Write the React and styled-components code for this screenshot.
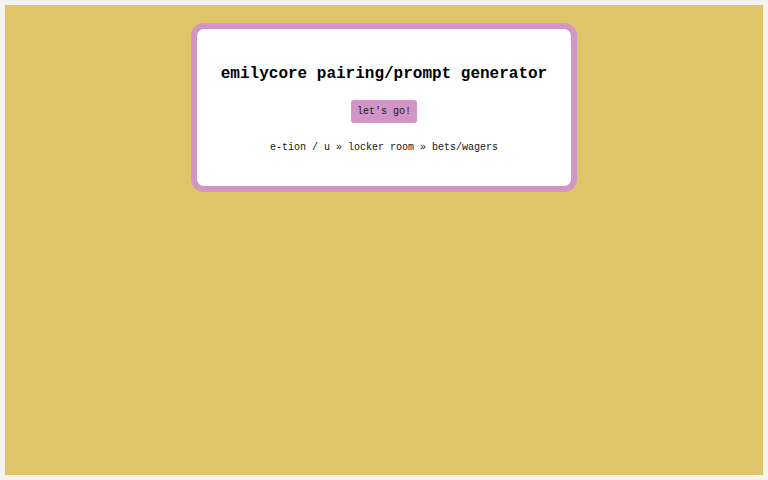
import React from "react";
import styled, { createGlobalStyle } from "styled-components";

const GlobalStyle = createGlobalStyle`
  html, body {
    margin: 0;
    padding: 0;
    background: #f4f3f1;
  }
  body {
    padding: 5px;
    box-sizing: border-box;
    height: 100vh;
    font-family: "Liberation Mono", "DejaVu Sans Mono", monospace;
  }
  #root {
    height: 100%;
  }
`;

const Page = styled.div`
  height: 100%;
  background: #dfc46a;
  display: flex;
  flex-direction: column;
  align-items: center;
  padding-top: 18px;
  box-sizing: border-box;
`;

const Card = styled.div`
  width: 374px;
  background: #fff;
  border: 6px solid #d195c6;
  border-radius: 13px;
  padding: 36px 0 32px;
  display: flex;
  flex-direction: column;
  align-items: center;
`;

const Title = styled.h1`
  margin: 0;
  font-size: 16px;
  line-height: 18px;
  font-weight: bold;
  color: #000;
`;

const GoButton = styled.button`
  margin-top: 17px;
  height: 23px;
  padding: 0 6px;
  border: none;
  border-radius: 3px;
  background: #d195c6;
  color: #1a1a1a;
  font-family: inherit;
  font-size: 10px;
  cursor: pointer;
`;

const Result = styled.p`
  margin: 19px 0 0;
  font-size: 10px;
  line-height: 12px;
  color: #111;
`;

export default function App() {
  return (
    <>
      <GlobalStyle />
      <Page>
        <Card>
          <Title>emilycore pairing/prompt generator</Title>
          <GoButton>let's go!</GoButton>
          <Result>e-tion / u » locker room » bets/wagers</Result>
        </Card>
      </Page>
    </>
  );
}
